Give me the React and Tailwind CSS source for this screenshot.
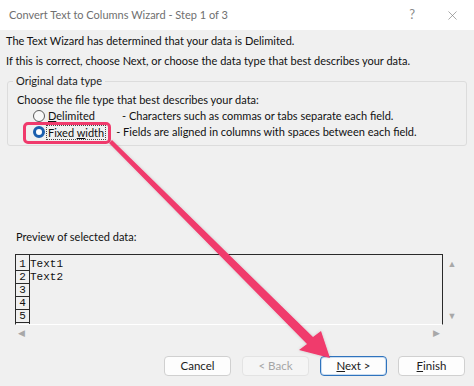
import { X } from 'lucide-react';

const rows = ['Text1', 'Text2', '', '', ''];

function Radio({ checked }) {
  if (checked) {
    return <span className="inline-block h-[12px] w-[12px] rounded-full border-[3px] border-[#1c5fae] bg-white" />;
  }
  return <span className="inline-block h-[12px] w-[12px] rounded-full border border-[#5a5a5a] bg-[#f8f8f8]" />;
}

function Button({ children, disabled, primary }) {
  let cls = 'flex h-[20px] w-[67px] items-center justify-center rounded-[4px] border text-[11.5px] ';
  if (disabled) cls += 'border-[#e3e3e3] bg-[#f5f5f5] text-[#a5a5a5]';
  else if (primary) cls += 'border-[#2f73bd] bg-[#fdfdfd] text-[#1b1b1b] shadow-[inset_0_0_0_1px_#c9dcf0]';
  else cls += 'border-[#d0d0d0] bg-[#fdfdfd] text-[#1b1b1b]';
  return <div className={cls}>{children}</div>;
}

export default function App() {
  return (
    <div className="relative h-[386px] w-[474px] overflow-hidden whitespace-nowrap bg-[#f0f0f0] font-['Lato',sans-serif] text-[11px] text-[#111]">
      {/* title bar */}
      <div className="flex h-[30px] items-center bg-white pl-[9px] pr-[14px]">
        <span className="text-[11px] text-[#6f6f6f]">Convert Text to Columns Wizard - Step 1 of 3</span>
        <span className="ml-auto mr-[30px] text-[13px] text-[#8a8a8a]">?</span>
        <X size={15} strokeWidth={1} className="text-[#777]" />
      </div>

      <div className="px-[6px] pt-[1px]">
        <p className="h-[20px] leading-[20px]">The Text Wizard has determined that your data is Delimited.</p>
        <p className="h-[20px] leading-[20px]">If this is correct, choose Next, or choose the data type that best describes your data.</p>

        {/* group box */}
        <div className="mx-[1px] mt-[10px] h-[65px] rounded-[3px] border border-[#dcdcdc] px-[9px]">
          <p className="-mt-[9px] -ml-[4px] h-[16px] w-fit bg-[#f0f0f0] px-[3px] leading-[16px] text-[#1b1b1b]">Original data type</p>
          <p className="mt-[3px] h-[16px] leading-[16px]">Choose the file type that best describes your data:</p>
          <div className="flex h-[16px] items-center">
            <div className="flex w-[28px] justify-end">
              <Radio />
            </div>
            <span className="ml-[3px] w-[74px]"><span className="underline">D</span>elimited</span>
            <span>- Characters such as commas or tabs separate each field.</span>
          </div>
          <div className="flex h-[16px] items-center">
            <div className="flex w-[28px] justify-end">
              <Radio checked />
            </div>
            <span className="ml-[1px] mr-[10px] border border-dotted border-[#444] px-[1px] leading-[13px]">
              Fixed <span className="underline">w</span>idth
            </span>
            <span>- Fields are aligned in columns with spaces between each field.</span>
          </div>
        </div>

        <p className="mt-[83px] ml-[10px] h-[16px] leading-[16px]">Preview of selected data:</p>

        {/* preview */}
        <div className="mt-[9px] ml-[9px] flex">
          <div className="flex h-[71px] w-[428px] border-x border-t border-b border-[#2a2a2a] border-b-white">
            <div className="flex w-[14px] flex-col border-r border-[#2a2a2a] pt-[3px]">
              {rows.map((r, i) => (
                <div key={i} className="flex h-[13px] items-end justify-center border-b border-[#2a2a2a] font-['Liberation_Mono',monospace] text-[11px] leading-[12px]">
                  {i + 1}
                </div>
              ))}
            </div>
            <div className="flex flex-col pt-[3px]">
              {rows.map((r, i) => (
                <div key={i} className="h-[13px] font-['Liberation_Mono',monospace] text-[11px] leading-[13px]">
                  {r}
                </div>
              ))}
            </div>
          </div>
          <div className="ml-[4px] flex h-[71px] w-[10px] flex-col items-center justify-between py-[5px] text-[9px] leading-[9px] text-[#a8a8a8]">
            <span>▲</span>
            <span>▼</span>
          </div>
        </div>
        <div className="ml-[9px] flex w-[428px] justify-between px-[3px] pt-[3px] text-[9px] leading-[10px] text-[#a8a8a8]">
          <span>◀</span>
          <span>▶</span>
        </div>

        {/* buttons */}
        <div className="mt-[18px] flex justify-end gap-[11px] pr-[3px]">
          <Button>Cancel</Button>
          <Button disabled>&lt; Back</Button>
          <Button primary><span><span className="underline">N</span>ext &gt;</span></Button>
          <Button><span><span className="underline">F</span>inish</span></Button>
        </div>
      </div>

      {/* annotation overlay */}
      <div className="absolute left-[23px] top-[122px] h-[22px] w-[88px] rounded-[5px] border-[3px] border-[#f03a6c]" />
      <svg className="pointer-events-none absolute left-0 top-0" width="474" height="386" viewBox="0 0 474 386">
        <defs>
          <filter id="sh" x="-10%" y="-10%" width="120%" height="120%">
            <feDropShadow dx="0" dy="0" stdDeviation="1.5" floodColor="#000" floodOpacity="0.18" />
          </filter>
        </defs>
        <polygon
          filter="url(#sh)"
          fill="#f03a6c"
          points="112,140 313,337 321,331 330,358 299,350 307,344 109,143"
        />
      </svg>
    </div>
  );
}
